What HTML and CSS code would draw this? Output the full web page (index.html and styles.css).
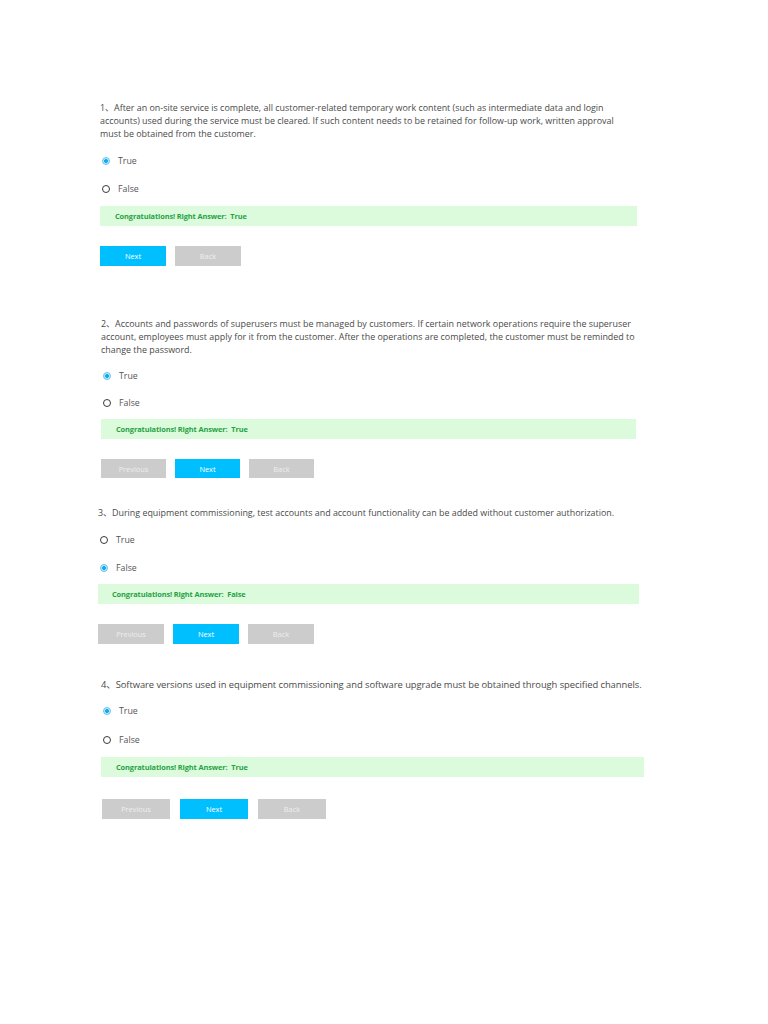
FILE: index.html
```html
<!DOCTYPE html>
<html lang="en">
<head>
<meta charset="utf-8">
<title>Quiz</title>
<link rel="stylesheet" href="styles.css">
</head>
<body>
<main class="page">
  <section class="q q1">
    <p class="q-text">1、After an on-site service is complete, all customer-related temporary work content (such as intermediate data and login accounts) used during the service must be cleared. If such content needs to be retained for follow-up work, written approval must be obtained from the customer.</p>
    <div class="opts">
      <div class="opt"><span class="radio on"></span><span>True</span></div>
      <div class="opt"><span class="radio"></span><span>False</span></div>
    </div>
    <div class="result">Congratulations! Right Answer:&nbsp; True</div>
    <div class="btns">
      <span class="btn next">Next</span>
      <span class="btn grey">Back</span>
    </div>
  </section>

  <section class="q q2">
    <p class="q-text">2、Accounts and passwords of superusers must be managed by customers. If certain network operations require the superuser account, employees must apply for it from the customer. After the operations are completed, the customer must be reminded to change the password.</p>
    <div class="opts">
      <div class="opt"><span class="radio on"></span><span>True</span></div>
      <div class="opt"><span class="radio"></span><span>False</span></div>
    </div>
    <div class="result">Congratulations! Right Answer:&nbsp; True</div>
    <div class="btns">
      <span class="btn grey">Previous</span>
      <span class="btn next">Next</span>
      <span class="btn grey">Back</span>
    </div>
  </section>

  <section class="q q3">
    <p class="q-text">3、During equipment commissioning, test accounts and account functionality can be added without customer authorization.</p>
    <div class="opts">
      <div class="opt"><span class="radio"></span><span>True</span></div>
      <div class="opt"><span class="radio on"></span><span>False</span></div>
    </div>
    <div class="result">Congratulations! Right Answer:&nbsp; False</div>
    <div class="btns">
      <span class="btn grey">Previous</span>
      <span class="btn next">Next</span>
      <span class="btn grey">Back</span>
    </div>
  </section>

  <section class="q q4">
    <p class="q-text">4、Software versions used in equipment commissioning and software upgrade must be obtained through specified channels.</p>
    <div class="opts">
      <div class="opt"><span class="radio on"></span><span>True</span></div>
      <div class="opt"><span class="radio"></span><span>False</span></div>
    </div>
    <div class="result">Congratulations! Right Answer:&nbsp; True</div>
    <div class="btns">
      <span class="btn grey">Previous</span>
      <span class="btn next">Next</span>
      <span class="btn grey">Back</span>
    </div>
  </section>
</main>
</body>
</html>
```

FILE: styles.css
```css
html, body {
  margin: 0;
  padding: 0;
  background: #ffffff;
}

body {
  font-family: "Open Sans", "Noto Sans CJK SC", sans-serif;
  color: #4a4a4a;
}

.page {
  width: 768px;
  height: 1024px;
  display: flex;
  flex-direction: column;
}

.q {
  display: flex;
  flex-direction: column;
}

.q-text {
  margin: 0;
  font-size: 8.92px;
  line-height: 13px;
}

.opts {
  display: flex;
  flex-direction: column;
  gap: 15px;
  margin-top: 14px;
}

.opt {
  display: flex;
  align-items: center;
  height: 13px;
  font-size: 8.8px;
  color: #555555;
  gap: 8px;
  padding-left: 2px;
}

.radio {
  width: 6px;
  height: 6px;
  border: 1.5px solid #3a3a3a;
  border-radius: 50%;
  box-sizing: content-box;
  flex: none;
}

.radio.on {
  border-color: #5cc8f5;
  background: radial-gradient(circle, #1aa9e8 0 1.6px, #bfe9fb 2.2px);
}

.result {
  margin-top: 11px;
  height: 20px;
  background: #dcfbdc;
  display: flex;
  align-items: center;
  padding-left: 15px;
  font-size: 7.4px;
  font-weight: 700;
  color: #25a244;
  letter-spacing: -0.1px;
}

.btns {
  display: flex;
  gap: 9px;
  margin-top: 20px;
}

.btn {
  height: 20px;
  width: 66px;
  display: flex;
  align-items: center;
  justify-content: center;
  font-size: 7.4px;
  color: #ffffff;
}

.btn.next {
  background: #00bfff;
}

.btn.grey {
  background: #cccccc;
  color: #eeeeee;
}

/* per-question placement (scanned page offsets) */
.q1 {
  margin: 101px 0 0 100px;
  width: 537px;
}
.q1 .q-text { width: 530px; }

.q2 {
  margin: 51px 0 0 101px;
  width: 535px;
}
.q2 .q-text { width: 534px; }
.q2 .opts { margin-top: 13px; gap: 14px; }
.q2 .result { margin-top: 10px; }
.q2 .btn { height: 19px; width: 65px; }

.q3 {
  margin: 28px 0 0 98px;
  width: 541px;
}
.q3 .result { margin-top: 10px; padding-left: 14px; }
.q3 .btns { margin-top: 20px; }
.q3 .btn { width: 66px; }

.q4 {
  margin: 34px 0 0 101px;
  width: 543px;
}
.q4 .q-text { font-size: 9.4px; letter-spacing: -0.05px; white-space: nowrap; }
.q4 .opts { margin-top: 13px; gap: 16px; }
.q4 .result { margin-top: 11px; }
.q4 .btns { margin-top: 22px; gap: 10px; padding-left: 1px; }
.q4 .btn { width: 68px; }
```
